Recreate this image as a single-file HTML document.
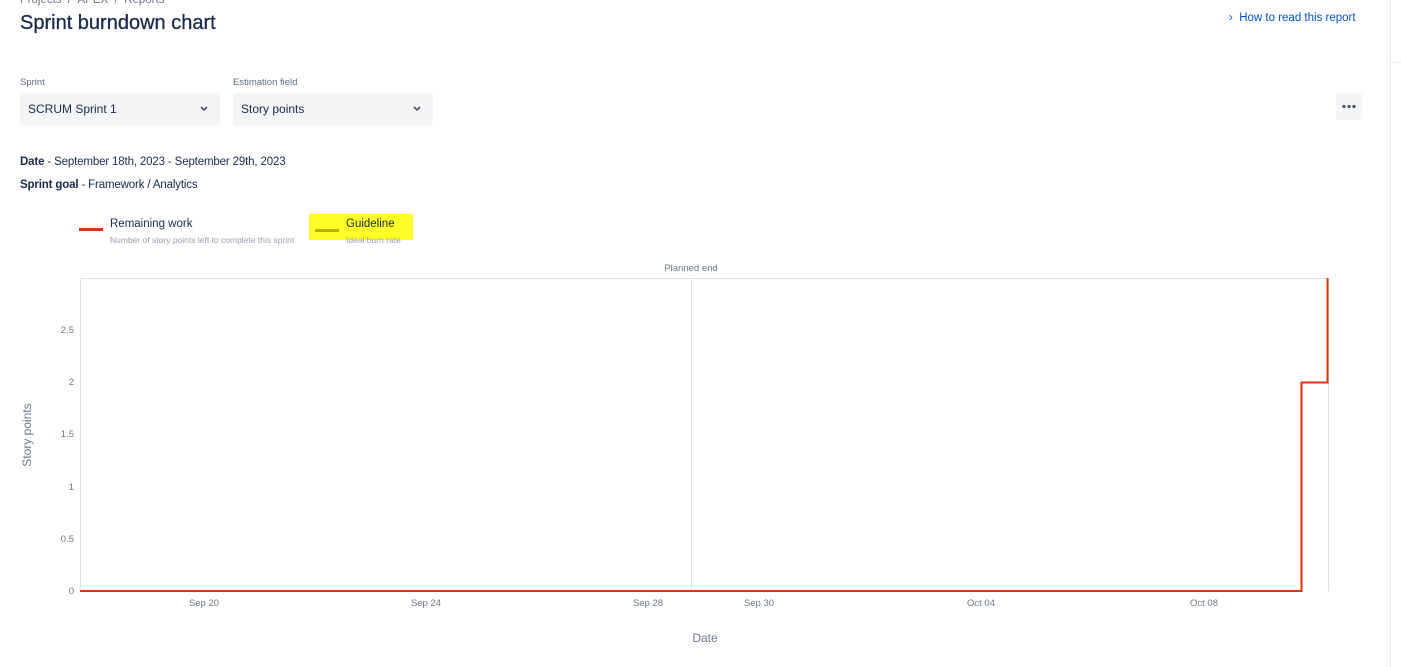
<!DOCTYPE html>
<html><head><meta charset="utf-8"><style>
body{margin:0;width:1401px;height:667px;overflow:hidden;background:#fff;font-family:"Liberation Sans",sans-serif;color:#172b4d;position:relative}
.a{position:absolute;white-space:nowrap}
.sel{position:absolute;background:#f4f5f7;border-radius:3px;height:32px;font-size:12px;line-height:32px;padding-left:8px;box-sizing:border-box}
.lbl{font-size:9.5px;color:#5e6c84}
.chev{position:absolute;right:12px;top:13px}
</style></head><body>
<div class="a" style="left:20px;top:-6px;font-size:11.5px;color:#6b778c">Projects &nbsp;/ &nbsp;APEX &nbsp;/ &nbsp;Reports</div>
<div class="a" style="left:20px;top:12px;font-size:20px;color:#172b4d;-webkit-text-stroke:0.3px #172b4d">Sprint burndown chart</div>
<div class="a" style="left:1229px;top:12px;font-size:11.5px;color:#0052cc">›&nbsp; How to read this report</div>
<div style="position:absolute;left:1390px;top:0;width:1px;height:667px;background:#ebecf0"></div>
<div style="position:absolute;left:1391px;top:62px;width:10px;height:1px;background:#ebecf0"></div>
<div class="a lbl" style="left:20px;top:77px">Sprint</div>
<div class="a lbl" style="left:233px;top:77px">Estimation field</div>
<div class="sel" style="left:20px;top:93px;width:200px">SCRUM Sprint 1<svg class="chev" width="8" height="6"><path d="M1 1l3 3 3-3" stroke="#42526e" stroke-width="1.6" fill="none"/></svg></div>
<div class="sel" style="left:233px;top:93px;width:200px">Story points<svg class="chev" width="8" height="6"><path d="M1 1l3 3 3-3" stroke="#42526e" stroke-width="1.6" fill="none"/></svg></div>
<div style="position:absolute;left:1336px;top:93px;width:26px;height:27px;background:#f4f5f7;border-radius:3px"><svg width="26" height="27"><circle cx="8" cy="13.5" r="1.6" fill="#42526e"/><circle cx="13" cy="13.5" r="1.6" fill="#42526e"/><circle cx="18" cy="13.5" r="1.6" fill="#42526e"/></svg></div>
<div class="a" style="left:20px;top:156px;font-size:11.5px;letter-spacing:-0.15px"><b>Date</b> - September 18th, 2023 - September 29th, 2023</div>
<div class="a" style="left:20px;top:179px;font-size:11.5px;letter-spacing:-0.15px"><b>Sprint goal</b> - Framework / Analytics</div>
<div style="position:absolute;left:79px;top:228px;width:24px;height:3px;background:#de350b"></div>
<div class="a" style="left:110px;top:218px;font-size:11.5px">Remaining work</div>
<div class="a" style="left:110px;top:235px;font-size:8.5px;color:#97a0af">Number of story points left to complete this sprint</div>
<div style="position:absolute;left:309px;top:214px;width:104px;height:26px;background:#ffff28"></div>
<div style="position:absolute;left:315px;top:229px;width:24px;height:3px;background:#b3b300"></div>
<div class="a" style="left:346px;top:218px;font-size:11.5px">Guideline</div>
<div class="a" style="left:346px;top:235px;font-size:8.5px;color:#97a0af">Ideal burn rate</div>
<svg style="position:absolute;left:0;top:0" width="1401" height="667" font-family="Liberation Sans" font-size="9.5" fill="#6b778c">
<text x="691" y="271" text-anchor="middle">Planned end</text>
<path d="M80.5 278.5H1328.5V591M80.5 278V592" stroke="#dfe1e6" fill="none"/>
<line x1="691.5" y1="278" x2="691.5" y2="591" stroke="#dfe1e6"/>
<g text-anchor="end">
<text x="74" y="594">0</text><text x="74" y="542">0.5</text><text x="74" y="490">1</text><text x="74" y="437">1.5</text><text x="74" y="385">2</text><text x="74" y="333">2.5</text>
</g>
<g text-anchor="middle">
<text x="204" y="606">Sep 20</text><text x="426" y="606">Sep 24</text><text x="648" y="606">Sep 28</text><text x="759" y="606">Sep 30</text><text x="981" y="606">Oct 04</text><text x="1204" y="606">Oct 08</text>
</g>
<text x="705" y="642" text-anchor="middle" font-size="12">Date</text>
<text transform="translate(31,435) rotate(-90)" text-anchor="middle" font-size="12">Story points</text>
<path d="M80 591H1301.5V382.5H1327.5V278" stroke="#de350b" stroke-width="2" fill="none"/>
</svg>
</body></html>
